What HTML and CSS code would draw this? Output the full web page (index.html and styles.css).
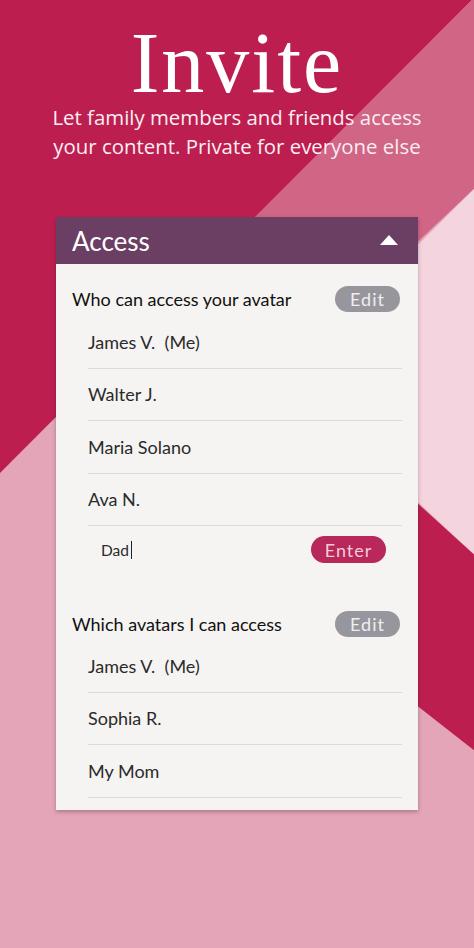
FILE: index.html
```html
<!DOCTYPE html>
<html lang="en">
<head>
  <meta charset="UTF-8">
  <meta name="viewport" content="width=device-width, initial-scale=1.0">
  <title>Invite</title>
  <link rel="stylesheet" href="styles.css">
</head>
<body>
  <div class="page">
    <!-- background shapes -->
    <svg class="backdrop" viewBox="0 0 474 948" preserveAspectRatio="none">
      <rect x="0" y="0" width="474" height="948" fill="#e3a5b7"/>
      <polygon points="0,0 472,0 0,473" fill="#bd1e50"/>
      <polygon points="472,0 480,0 480,183 250,400 250,222" fill="#d06585"/>
      <polygon points="480,183 480,560 300,392 300,362" fill="#f4d4de"/>
      <polygon points="480,560 480,755 360,661 360,451" fill="#bd1e50"/>
    </svg>

    <header class="hero">
      <h1>Invite</h1>
      <p>Let family members and friends access<br>your content. Private for everyone else</p>
    </header>

    <section class="card">
      <div class="card-head">
        <h2>Access</h2>
        <svg class="toggle" viewBox="0 0 18 10" width="18" height="10">
          <polygon points="0,10 9,0 18,10" fill="#fff"/>
        </svg>
      </div>

      <div class="card-body">
        <div class="group">
          <div class="group-head">
            <h3>Who can access your avatar</h3>
            <button class="pill edit">Edit</button>
          </div>
          <ul class="people">
            <li>James V.&nbsp; (Me)</li>
            <li>Walter J.</li>
            <li>Maria Solano</li>
            <li>Ava N.</li>
          </ul>
          <div class="entry">
            <span class="typed">Dad<span class="caret"></span></span>
            <button class="pill enter">Enter</button>
          </div>
        </div>

        <div class="group second">
          <div class="group-head">
            <h3>Which avatars I can access</h3>
            <button class="pill edit">Edit</button>
          </div>
          <ul class="people">
            <li>James V.&nbsp; (Me)</li>
            <li>Sophia R.</li>
            <li>My Mom</li>
          </ul>
        </div>
      </div>
    </section>
  </div>
</body>
</html>
```

FILE: styles.css
```css
body {
  margin: 0;
  padding: 0;
  font-family: Lato, "Open Sans", sans-serif;
}
.page {
  position: relative;
  width: 474px;
  min-height: 948px;
  overflow: hidden;
}
.backdrop {
  position: absolute;
  left: 0;
  top: 0;
  width: 474px;
  height: 948px;
}
.hero {
  position: relative;
  text-align: center;
  color: #fff;
  padding-top: 23px;
}
.hero h1 {
  margin: 0;
  font-family: "Liberation Serif", serif;
  font-weight: normal;
  font-size: 86px;
  line-height: 80px;
  letter-spacing: 2px;
}
.hero p {
  margin: 0;
  font-family: "Open Sans", sans-serif;
  font-size: 20.4px;
  line-height: 29px;
  color: #fbeef2;
}
.card {
  position: relative;
  margin: 56px 0 0 56px;
  width: 362px;
  background-color: #f5f4f2;
  box-shadow: 0 2px 4px rgba(0, 0, 0, 0.25);
}
.card-head {
  height: 47px;
  background-color: #6b3f63;
  display: flex;
  align-items: center;
  justify-content: space-between;
  padding: 0 20px 0 16px;
}
.card-head h2 {
  margin: 0;
  color: #fff;
  font-weight: normal;
  font-size: 26px;
}
.toggle {
  margin-top: -2px;
}
.card-body {
  padding: 22px 0 12px;
}
.group-head {
  height: 26px;
  display: flex;
  align-items: center;
  justify-content: space-between;
  padding: 0 18px 0 16px;
}
.group-head h3 {
  margin: 0;
  font-size: 18px;
  font-weight: normal;
  color: #111;
}
.pill {
  border: none;
  border-radius: 14px;
  font-family: Lato, sans-serif;
  font-size: 18px;
  letter-spacing: 1px;
  padding: 0;
  height: 26px;
}
.edit {
  width: 65px;
  background-color: #98969d;
  color: #eeedf0;
}
.enter {
  width: 75px;
  height: 27px;
  background-color: #b8285a;
  color: #f6cbd7;
}
.people {
  list-style: none;
  margin: 4px 16px 0 32px;
  padding: 0;
}
.second .people {
  margin-top: 3px;
}
.people li {
  box-sizing: border-box;
  height: 52.5px;
  display: flex;
  align-items: center;
  border-bottom: 1px solid #dcdbd9;
  font-size: 18px;
  color: #2a2a2a;
}
.entry {
  height: 47px;
  display: flex;
  align-items: center;
  justify-content: space-between;
  padding: 0 32px 0 45px;
}
.typed {
  font-size: 15.5px;
  color: #2a2a2a;
  display: flex;
  align-items: center;
}
.caret {
  display: inline-block;
  width: 1.5px;
  height: 18px;
  margin-left: 2px;
  background-color: #222;
}
.second {
  margin-top: 38px;
}
```
